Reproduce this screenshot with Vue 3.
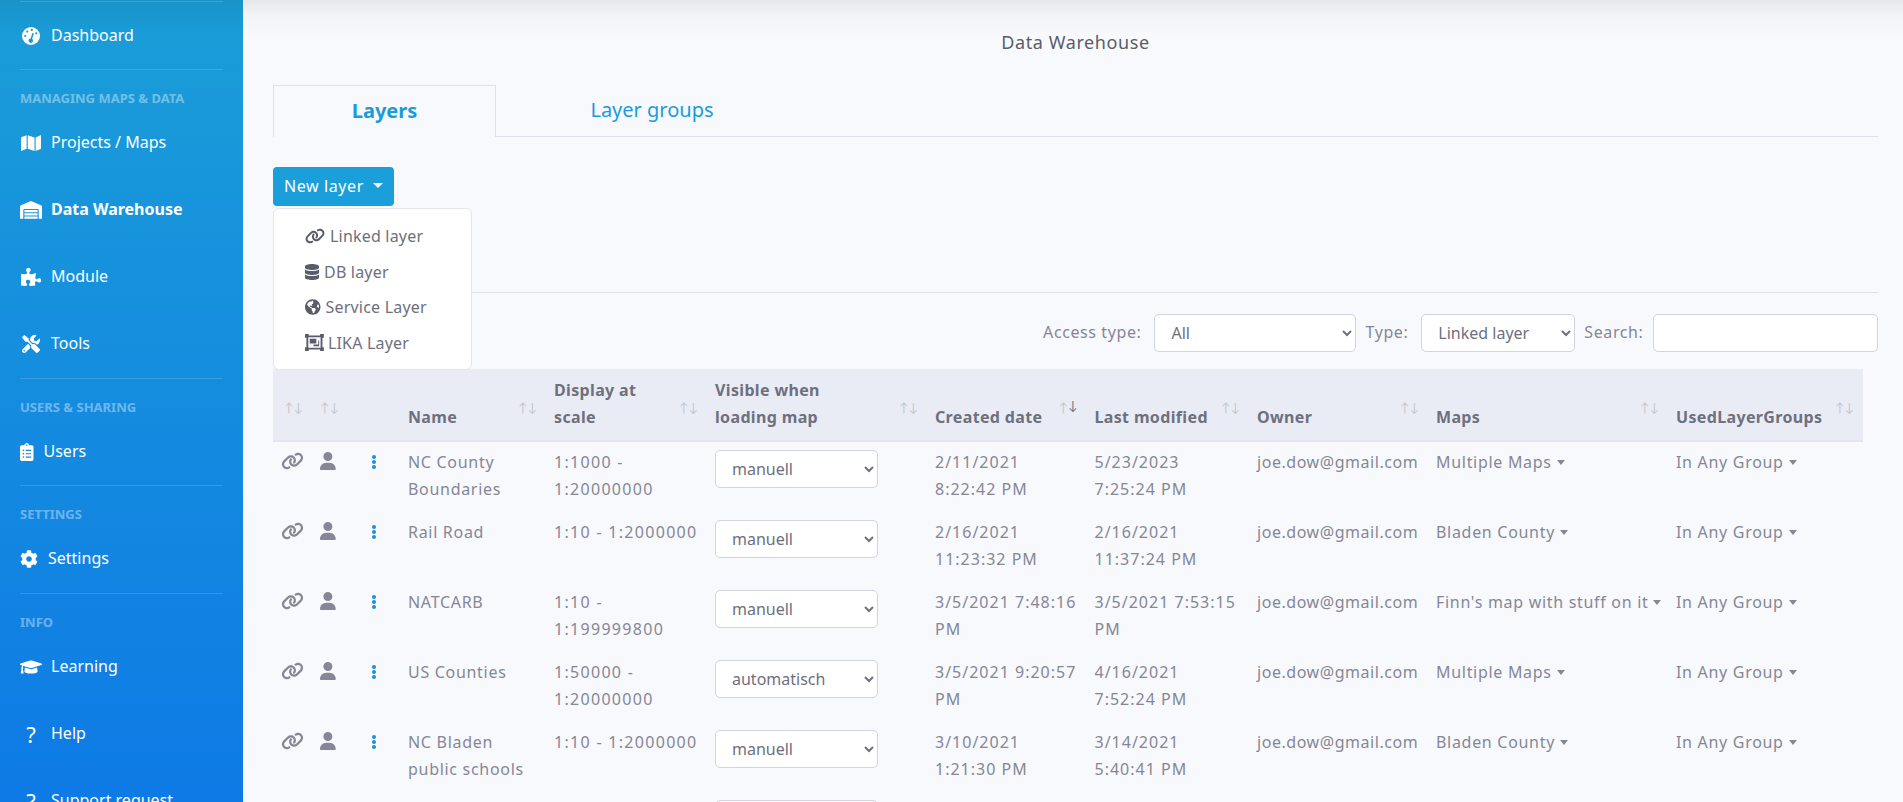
<script setup>
import { ref } from 'vue'

const icons = {
  map: ['0 0 576 512', 'M0 117.66v346.32c0 11.32 11.43 19.06 21.94 14.86L160 416V32L20.12 87.95A32.006 32.006 0 0 0 0 117.66zM192 416l192 64V96L192 32v384zM554.06 33.16L416 96v384l139.88-55.95A31.996 31.996 0 0 0 576 394.34V48.02c0-11.32-11.43-19.06-21.94-14.86z'],
  warehouse: ['0 0 640 512', 'M504 352H136.4c-4.4 0-8 3.6-8 8l-.1 48c0 4.4 3.6 8 8 8H504c4.4 0 8-3.6 8-8v-48c0-4.4-3.6-8-8-8zm0 96H136.1c-4.4 0-8 3.6-8 8l-.1 48c0 4.4 3.6 8 8 8h368c4.4 0 8-3.6 8-8v-48c0-4.4-3.6-8-8-8zm0-192H136.6c-4.4 0-8 3.6-8 8l-.1 48c0 4.4 3.6 8 8 8H504c4.4 0 8-3.6 8-8v-48c0-4.4-3.6-8-8-8zm106.5-139L338.4 3.7a48.15 48.15 0 0 0-36.9 0L29.5 117C11.7 124.5 0 141.9 0 161.3V504c0 4.4 3.6 8 8 8h80c4.4 0 8-3.6 8-8V256c0-17.6 14.6-32 32.6-32h382.8c18 0 32.6 14.4 32.6 32v248c0 4.4 3.6 8 8 8h80c4.4 0 8-3.6 8-8V161.3c0-19.4-11.7-36.8-29.5-44.3z'],
  puzzle: ['0 0 576 512', 'M519.442 288.651c-41.519 0-59.5 31.593-82.058 31.593C377.409 320.244 432 144 432 144s-196.288 80-196.288-3.297c0-35.827 36.288-46.25 36.288-85.985C272 19.216 243.885 0 210.539 0c-34.654 0-66.366 18.891-66.366 56.346 0 41.364 31.711 59.277 31.711 81.75C175.885 207.719 0 166.758 0 166.758v333.237s178.635 41.047 178.635-28.662c0-22.473-40-40.107-40-81.471 0-37.456 29.25-56.346 63.577-56.346 33.673 0 61.788 19.216 61.788 54.717 0 39.735-36.288 50.158-36.288 85.985 0 60.803 129.675 25.73 181.23 25.73 0 0-34.725-120.101 25.827-120.101 35.962 0 46.423 36.152 86.308 36.152C556.712 416 576 387.99 576 354.443c0-34.199-18.962-65.792-56.558-65.792z'],
  tools: ['0 0 512 512', 'M501.1 395.7L384 278.6c-23.1-23.1-57.6-27.6-85.4-13.9L192 158.1V96L64 0 0 64l96 128h62.1l106.6 106.6c-13.6 27.8-9.2 62.3 13.9 85.4l117.1 117.1c14.6 14.6 38.2 14.6 52.7 0l52.7-52.7c14.5-14.6 14.5-38.2 0-52.7zM331.7 225c28.3 0 54.9 11 74.9 31l19.4 19.4c15.8-6.9 30.8-16.5 43.8-29.5 37.1-37.1 49.7-89.3 37.9-136.7-2.2-9-13.5-12.1-20.1-5.5l-74.4 74.4-67.9-11.3L334 98.9l74.4-74.4c6.6-6.6 3.4-17.9-5.7-20.2-47.4-11.7-99.6.9-136.6 37.9-28.5 28.5-41.9 66.1-41.2 103.6l82.1 82.1c8.1-1.9 16.5-2.9 24.7-2.9zm-103.9 82l-56.7-56.7L18.7 402.8c-25 25-25 65.5 0 90.5s65.5 25 90.5 0l123.6-123.6c-7.6-19.9-9.9-41.6-5-62.7zM64 472c-13.2 0-24-10.8-24-24 0-13.3 10.7-24 24-24s24 10.7 24 24c0 13.2-10.7 24-24 24z'],
  clipboard: ['0 0 384 512', 'M336 64h-80c0-35.3-28.7-64-64-64s-64 28.7-64 64H48C21.5 64 0 85.5 0 112v352c0 26.5 21.5 48 48 48h288c26.5 0 48-21.5 48-48V112c0-26.5-21.5-48-48-48zM96 424c-13.3 0-24-10.7-24-24s10.7-24 24-24 24 10.7 24 24-10.7 24-24 24zm0-96c-13.3 0-24-10.7-24-24s10.7-24 24-24 24 10.7 24 24-10.7 24-24 24zm0-96c-13.3 0-24-10.7-24-24s10.7-24 24-24 24 10.7 24 24-10.7 24-24 24zm96-192c13.3 0 24 10.7 24 24s-10.7 24-24 24-24-10.7-24-24 10.7-24 24-24zm128 368c0 4.4-3.6 8-8 8H168c-4.4 0-8-3.6-8-8v-16c0-4.4 3.6-8 8-8h144c4.4 0 8 3.6 8 8v16zm0-96c0 4.4-3.6 8-8 8H168c-4.4 0-8-3.6-8-8v-16c0-4.4 3.6-8 8-8h144c4.4 0 8 3.6 8 8v16zm0-96c0 4.4-3.6 8-8 8H168c-4.4 0-8-3.6-8-8v-16c0-4.4 3.6-8 8-8h144c4.4 0 8 3.6 8 8v16z'],
  cog: ['0 0 512 512', 'M487.4 315.7l-42.6-24.6c4.3-23.2 4.3-47 0-70.2l42.6-24.6c4.9-2.8 7.1-8.6 5.5-14-11.1-35.6-30-67.8-54.7-94.6-3.8-4.1-10-5.1-14.8-2.3L380.8 110c-17.9-15.4-38.5-27.3-60.8-35.1V25.8c0-5.6-3.9-10.5-9.4-11.7-36.7-8.2-74.3-7.8-109.2 0-5.5 1.2-9.4 6.1-9.4 11.7V75c-22.2 7.9-42.8 19.8-60.8 35.1L88.7 85.5c-4.9-2.8-11-1.9-14.8 2.3-24.7 26.7-43.6 58.9-54.7 94.6-1.7 5.4.6 11.2 5.5 14L67.3 221c-4.3 23.2-4.3 47 0 70.2l-42.6 24.6c-4.9 2.8-7.1 8.6-5.5 14 11.1 35.6 30 67.8 54.7 94.6 3.8 4.1 10 5.1 14.8 2.3l42.6-24.6c17.9 15.4 38.5 27.3 60.8 35.1v49.2c0 5.6 3.9 10.5 9.4 11.7 36.7 8.2 74.3 7.8 109.2 0 5.5-1.2 9.4-6.1 9.4-11.7v-49.2c22.2-7.9 42.8-19.8 60.8-35.1l42.6 24.6c4.9 2.8 11 1.9 14.8-2.3 24.7-26.7 43.6-58.9 54.7-94.6 1.5-5.5-.7-11.3-5.6-14.1zM256 336c-44.1 0-80-35.9-80-80s35.9-80 80-80 80 35.9 80 80-35.9 80-80 80z'],
  cap: ['0 0 640 512', 'M622.34 153.2L343.4 67.5c-15.2-4.67-31.6-4.67-46.79 0L17.66 153.2c-23.54 7.23-23.54 38.36 0 45.59l48.63 14.94c-10.67 13.19-17.23 29.28-17.88 46.9C38.78 266.15 32 276.11 32 288c0 10.78 5.68 19.85 13.86 25.65L20.33 428.53C18.11 438.52 25.71 448 35.94 448h56.11c10.24 0 17.84-9.48 15.62-19.47L82.14 313.65C90.32 307.85 96 298.78 96 288c0-11.57-6.47-21.25-15.66-26.87.76-15.02 8.44-28.3 20.69-36.72L296.6 284.5c9.06 2.78 26.44 6.25 46.79 0l278.95-85.7c23.55-7.24 23.55-38.36 0-45.6zM352.79 315.09c-28.53 8.76-52.84 3.92-65.59 0l-145.02-44.55L128 384c0 35.35 85.96 64 192 64s192-28.65 192-64l-14.18-113.47-145.03 44.56z'],
  link: ['0 0 640 512', 'M579.8 267.7c56.5-56.5 56.5-148 0-204.5c-50-50-128.8-56.5-186.3-15.4l-1.6 1.1c-14.4 10.3-17.7 30.3-7.4 44.6s30.3 17.7 44.6 7.4l1.6-1.1c32.1-22.9 76-19.3 103.8 8.6c31.5 31.5 31.5 82.5 0 114L422.3 334.8c-31.5 31.5-82.5 31.5-114 0c-27.9-27.9-31.5-71.8-8.6-103.8l1.1-1.6c10.3-14.4 6.9-34.4-7.4-44.6s-34.4-6.9-44.6 7.4l-1.1 1.6C206.5 251.2 213 330 263 380c56.5 56.5 148 56.5 204.5 0L579.8 267.7zM60.2 244.3c-56.5 56.5-56.5 148 0 204.5c50 50 128.8 56.5 186.3 15.4l1.6-1.1c14.4-10.3 17.7-30.3 7.4-44.6s-30.3-17.7-44.6-7.4l-1.6 1.1c-32.1 22.9-76 19.3-103.8-8.6C74 372 74 321 105.5 289.5L217.7 177.2c31.5-31.5 82.5-31.5 114 0c27.9 27.9 31.5 71.8 8.6 103.9l-1.1 1.6c-10.3 14.4-6.9 34.4 7.4 44.6s34.4 6.9 44.6-7.4l1.1-1.6C433.5 260.8 427 182 377 132c-56.5-56.5-148-56.5-204.5 0L60.2 244.3z'],
  database: ['0 0 448 512', 'M448 73.143v45.714C448 159.143 347.667 192 224 192S0 159.143 0 118.857V73.143C0 32.857 100.333 0 224 0s224 32.857 224 73.143zM448 176v102.857C448 319.143 347.667 352 224 352S0 319.143 0 278.857V176c48.125 33.143 136.208 48.572 224 48.572S399.874 209.143 448 176zm0 160v102.857C448 479.143 347.667 512 224 512S0 479.143 0 438.857V336c48.125 33.143 136.208 48.572 224 48.572S399.874 369.143 448 336z'],
  globe: ['0 0 496 512', 'M248 8C111.03 8 0 119.03 0 256s111.03 248 248 248 248-111.03 248-248S384.97 8 248 8zm82.29 357.6c-3.9 3.88-7.99 7.95-11.31 11.28-2.99 3-5.1 6.7-6.17 10.71-1.51 5.66-2.73 11.38-4.77 16.87l-17.39 46.85c-13.76 3-28 4.69-42.65 4.69v-27.38c1.69-12.62-7.64-36.26-22.63-51.25-6-6-9.37-14.14-9.37-22.63v-32.01c0-11.64-6.27-22.34-16.46-27.97-14.37-7.95-34.81-19.06-48.81-26.11-11.48-5.78-22.1-13.14-31.65-21.75l-.8-.72a114.792 114.792 0 0 1-18.06-20.74c-9.38-13.77-24.66-36.42-34.59-51.14 20.47-45.5 57.36-82.04 103.2-101.89l24.01 12.01C203.48 89.74 216 82.01 216 70.11v-11.3c7.99-1.29 16.12-2.11 24.39-2.42l28.3 28.3c6.25 6.25 6.25 16.38 0 22.63L264 112l-10.34 10.34c-3.12 3.12-3.12 8.19 0 11.31l4.69 4.69c3.12 3.12 3.12 8.19 0 11.31l-8 8a8.008 8.008 0 0 1-5.66 2.34h-8.99c-2.08 0-4.08.81-5.58 2.27l-9.92 9.65a8.008 8.008 0 0 0-1.58 9.31l15.59 31.19c2.66 5.32-1.21 11.58-7.15 11.58h-5.64c-1.93 0-3.79-.7-5.24-1.96l-9.28-8.06a16.017 16.017 0 0 0-15.55-3.1l-31.17 10.39a11.95 11.95 0 0 0-8.17 11.34c0 4.53 2.56 8.66 6.61 10.69l11.08 5.54c9.41 4.71 19.79 7.16 30.31 7.16s22.59 27.29 32 32h66.75c8.49 0 16.62 3.37 22.63 9.37l13.69 13.69a30.503 30.503 0 0 1 8.93 21.57 46.536 46.536 0 0 1-13.72 32.98zM417 274.25c-5.79-1.45-10.84-5-14.15-9.97l-17.98-26.97a23.97 23.97 0 0 1 0-26.62l19.59-29.38c2.32-3.47 5.5-6.29 9.24-8.15l12.98-6.49C440.2 193.59 448 223.87 448 256c0 8.67-.74 17.16-1.82 25.54L417 274.25z'],
  user: ['0 0 448 512', 'M224 256A128 128 0 1 0 224 0a128 128 0 1 0 0 256zm-45.7 48C79.8 304 0 383.8 0 482.3C0 498.7 13.3 512 29.7 512H418.3c16.4 0 29.7-13.3 29.7-29.7C448 383.8 368.2 304 269.7 304H178.3z']
}

const navGroups = [
  { items: [{ label: 'Dashboard', gauge: true }] },
  {
    heading: 'MANAGING MAPS & DATA',
    items: [
      { label: 'Projects / Maps', icon: 'map' },
      { label: 'Data Warehouse', icon: 'warehouse', active: true },
      { label: 'Module', icon: 'puzzle' },
      { label: 'Tools', icon: 'tools' }
    ]
  },
  { heading: 'USERS & SHARING', items: [{ label: 'Users', icon: 'clipboard', narrow: true }] },
  { heading: 'SETTINGS', items: [{ label: 'Settings', icon: 'cog', narrow: true }] },
  {
    heading: 'INFO',
    items: [
      { label: 'Learning', icon: 'cap' },
      { label: 'Help', glyph: '?' },
      { label: 'Support request', glyph: '?' }
    ]
  }
]

const newLayerItems = [
  { label: 'Linked layer', icon: 'link', cls: 'm-link' },
  { label: 'DB layer', icon: 'database', cls: 'm-db' },
  { label: 'Service Layer', icon: 'globe', cls: 'm-globe' },
  { label: 'LIKA Layer', square: true, cls: 'm-lika' }
]

const headers = [
  { text: '' },
  { text: '' },
  { text: '', noSort: true },
  { text: 'Name' },
  { text: 'Display at\nscale' },
  { text: 'Visible when\nloading map' },
  { text: 'Created date', sorted: true },
  { text: 'Last modified' },
  { text: 'Owner' },
  { text: 'Maps' },
  { text: 'UsedLayerGroups' }
]

const colWidths = [39, 36, 52, 146, 161, 220, 159.5, 162.5, 179, 240, 195]

const layers = ref([
  { name: 'NC County\nBoundaries', scale: '1:1000 -\n1:20000000', visible: 'manuell', created: '2/11/2021\n8:22:42 PM', modified: '5/23/2023\n7:25:24 PM', maps: 'Multiple Maps' },
  { name: 'Rail Road', scale: '1:10 - 1:2000000', visible: 'manuell', created: '2/16/2021\n11:23:32 PM', modified: '2/16/2021\n11:37:24 PM', maps: 'Bladen County' },
  { name: 'NATCARB', scale: '1:10 -\n1:199999800', visible: 'manuell', created: '3/5/2021 7:48:16\nPM', modified: '3/5/2021 7:53:15\nPM', maps: "Finn's map with stuff on it" },
  { name: 'US Counties', scale: '1:50000 -\n1:20000000', visible: 'automatisch', created: '3/5/2021 9:20:57\nPM', modified: '4/16/2021\n7:52:24 PM', maps: 'Multiple Maps' },
  { name: 'NC Bladen\npublic schools', scale: '1:10 - 1:2000000', visible: 'manuell', created: '3/10/2021\n1:21:30 PM', modified: '3/14/2021\n5:40:41 PM', maps: 'Bladen County' }
])
</script>

<template>
  <div class="layout">
    <aside class="sidebar">
      <template v-for="(group, g) in navGroups" :key="g">
        <hr class="side-line" />
        <div v-if="group.heading" class="side-heading">{{ group.heading }}</div>
        <a v-for="item in group.items" :key="item.label" class="nav-item" :class="{ active: item.active }">
          <span class="nav-icon" :class="{ narrow: item.narrow }">
            <svg v-if="item.gauge" viewBox="0 0 512 512" class="icon">
              <circle cx="256" cy="256" r="256" fill="#fff" />
              <g fill="#199ad6">
                <circle cx="92" cy="258" r="31" />
                <circle cx="150" cy="130" r="31" />
                <circle cx="278" cy="84" r="31" />
                <circle cx="408" cy="180" r="31" />
                <path d="M296 170l44 14-52 152a64 64 0 1 1-44-12z" />
              </g>
            </svg>
            <span v-else-if="item.glyph" class="nav-glyph">{{ item.glyph }}</span>
            <svg v-else :viewBox="icons[item.icon][0]" class="icon"><path :d="icons[item.icon][1]" fill="#fff" /></svg>
          </span>
          <span class="nav-label">{{ item.label }}</span>
        </a>
      </template>
    </aside>

    <main class="content">
      <h1 class="page-title">Data Warehouse</h1>

      <nav class="tabs">
        <a class="tab active">Layers</a>
        <a class="tab">Layer groups</a>
      </nav>

      <div class="new-layer">
        <button class="btn-new">New layer<span class="caret"></span></button>
        <ul class="menu">
          <li v-for="m in newLayerItems" :key="m.label" :class="m.cls">
            <svg v-if="m.square" viewBox="0 0 20 18" class="menu-icon">
              <path fill="#5a5c69" fill-rule="evenodd" d="M0 0h4v1.5h12V0h4v4h-1.5v10H20v4h-4v-1.5H4V18H0v-4h1.5V4H0zM3.5 3.5v11h13v-11zM5 5h7v5H5zM9 11h5V7h1v6H9z" />
            </svg>
            <svg v-else :viewBox="icons[m.icon][0]" class="menu-icon"><path :d="icons[m.icon][1]" fill="#5a5c69" /></svg>
            <span>{{ m.label }}</span>
          </li>
        </ul>
      </div>

      <hr class="section-line" />

      <div class="filters">
        <label>Access type:</label>
        <select class="field f-access"><option>All</option></select>
        <label>Type:</label>
        <select class="field f-type"><option>Linked layer</option></select>
        <label class="search-label">Search:</label>
        <input class="field f-search" type="text" />
      </div>

      <table class="layers">
        <colgroup>
          <col v-for="(w, i) in colWidths" :key="i" :style="{ width: w + 'px' }" />
        </colgroup>
        <thead>
          <tr>
            <th v-for="(h, i) in headers" :key="i">
              {{ h.text }}
              <span v-if="!h.noSort" class="sort">
                <i>↑</i><i :class="{ on: h.sorted }">↓</i>
              </span>
            </th>
          </tr>
        </thead>
        <tbody>
          <tr v-for="layer in layers" :key="layer.name">
            <td><svg :viewBox="icons.link[0]" class="row-link"><path :d="icons.link[1]" fill="#858796" /></svg></td>
            <td><svg :viewBox="icons.user[0]" class="row-user"><path :d="icons.user[1]" fill="#858796" /></svg></td>
            <td class="dots-cell"><span class="dots"><b></b><b></b><b></b></span></td>
            <td class="wrap">{{ layer.name }}</td>
            <td class="wrap scale">{{ layer.scale }}</td>
            <td>
              <select class="field f-visible" :value="layer.visible">
                <option>manuell</option>
                <option>automatisch</option>
              </select>
            </td>
            <td class="wrap date">{{ layer.created }}</td>
            <td class="wrap date">{{ layer.modified }}</td>
            <td class="owner">joe.dow@gmail.com</td>
            <td class="drop-cell"><span class="drop">{{ layer.maps }}</span></td>
            <td class="drop-cell"><span class="drop">In Any Group</span></td>
          </tr>
          <tr>
            <td colspan="5"></td>
            <td><select class="field f-visible"><option>manuell</option></select></td>
            <td colspan="5"></td>
          </tr>
        </tbody>
      </table>
    </main>
  </div>
</template>

<style>
html, body {
  margin: 0;
  height: 100%;
  overflow: hidden;
}
</style>

<style scoped>
* {
  box-sizing: border-box;
}

.layout {
  display: flex;
  height: 100vh;
  overflow: hidden;
  font-family: "Noto Sans", Lato, sans-serif;
  font-size: 16px;
  color: #858796;
  background: linear-gradient(#e6e7ea, #f3f4f7 16px, #f8f9fd 36px);
}

.sidebar {
  width: 243px;
  flex-shrink: 0;
  padding: 1px 20px 0;
  color: #fff;
  background: linear-gradient(180deg, #1894c9 0, #1a9cd8 36px, #0e7ae6 100%);
}

.side-line {
  margin: 0;
  border: 0;
  border-top: 1px solid rgba(255, 255, 255, 0.15);
}

.side-heading {
  padding-top: 20px;
  height: 39.5px;
  line-height: 16px;
  font-size: 13px;
  font-weight: 700;
  color: rgba(255, 255, 255, 0.4);
}

.nav-item {
  display: flex;
  align-items: center;
  height: 67px;
}

.nav-item.active {
  font-weight: 700;
}

.nav-label {
  padding-bottom: 2px;
}

.nav-icon {
  display: flex;
  justify-content: center;
  width: 22px;
  margin-right: 9px;
}

.nav-icon.narrow {
  width: auto;
  margin-right: 10px;
}

.icon {
  display: block;
  height: 18px;
}

.nav-glyph {
  font-size: 22px;
  font-weight: 400;
  line-height: 18px;
}

.content {
  flex: 1;
  min-width: 0;
  padding: 0 25px 0 30px;
}

.page-title {
  margin: 0;
  padding: 29px 0 29px;
  font-size: 18px;
  font-weight: 400;
  letter-spacing: 0.6px;
  line-height: 27px;
  text-align: center;
  color: #5a5c69;
}

.tabs {
  display: flex;
  height: 52px;
  border-bottom: 1px solid #dfe2ec;
}

.tab {
  display: flex;
  align-items: center;
  justify-content: center;
  height: 52px;
  font-size: 20px;
  color: #1a9bdb;
}

.tab.active {
  width: 223px;
  padding-bottom: 2px;
  font-weight: 700;
  background: #f8f9fd;
  border: 1px solid #dfe2ec;
  border-bottom: 0;
}

.tab:not(.active) {
  width: 312px;
  padding-bottom: 4px;
}

.new-layer {
  position: relative;
  margin-top: 30px;
  height: 39px;
}

.btn-new {
  display: inline-flex;
  align-items: center;
  width: 121px;
  height: 39px;
  padding: 0 11px 2px;
  border: 0;
  border-radius: 4px;
  background: #1a9fdb;
  color: #fff;
  font: inherit;
  letter-spacing: 0.6px;
}

.caret {
  margin-left: 9px;
  border-top: 5px solid #fff;
  border-left: 5px solid transparent;
  border-right: 5px solid transparent;
}

.menu {
  position: absolute;
  top: 41px;
  left: 0;
  z-index: 5;
  width: 199px;
  height: 162px;
  margin: 0;
  padding: 9.5px 0 0 31px;
  list-style: none;
  background: #fff;
  border: 1px solid #e3e6f0;
  border-radius: 6px;
  color: #6e707e;
  letter-spacing: 0.2px;
}

.menu li {
  display: flex;
  align-items: center;
  height: 35.5px;
}

.menu-icon {
  display: block;
  height: 16px;
}

.m-link span { margin-left: 5px; }
.m-db span { margin-left: 5px; }
.m-globe span { margin-left: 5px; }
.m-lika span { margin-left: 4px; }
.m-lika .menu-icon { height: 17px; }

.section-line {
  margin: 86px 0 0;
  border: 0;
  border-top: 1px solid #dfe2ec;
}

.filters {
  display: flex;
  justify-content: flex-end;
  align-items: center;
  margin-top: 20px;
  height: 39px;
}

.filters label {
  margin-left: 9px;
  margin-right: 13px;
  padding-bottom: 2px;
  letter-spacing: 0.6px;
}

.filters .search-label {
  margin-right: 9.5px;
}

.field {
  height: 38px;
  padding: 0 12px;
  background-color: #fff;
  border: 1px solid #d1d3e2;
  border-radius: 5px;
  font: inherit;
  letter-spacing: 0;
  color: #6e707e;
}

.f-access { width: 202px; }
.f-type { width: 154px; }
.f-search { width: 225px; }
.f-visible { width: 163px; }

.layers {
  width: 1590px;
  margin-top: 17px;
  table-layout: fixed;
  border-collapse: collapse;
  line-height: 27px;
  letter-spacing: 0.7px;
}

.layers th {
  position: relative;
  padding: 7px 8px 9px;
  vertical-align: bottom;
  text-align: left;
  white-space: pre-line;
  font-weight: 700;
  letter-spacing: 0.35px;
  color: #6e707e;
  background: #e9ecf4;
  border-bottom: 2px solid #e3e6f0;
  height: 72px;
}

.layers td {
  padding: 7px 8px 9px;
  vertical-align: top;
  height: 70px;
}

.wrap {
  white-space: pre-line;
}

.scale {
  letter-spacing: 1.3px;
}

.date {
  letter-spacing: 1px;
}

.owner {
  letter-spacing: 0.55px;
}

.sort {
  position: absolute;
  right: 9px;
  bottom: 18px;
  display: flex;
  font-size: 12.5px;
  line-height: 28px;
  font-weight: 400;
  letter-spacing: 0;
  color: #6e707e;
}

.sort i {
  font-style: normal;
  opacity: 0.3;
}

.sort i.on {
  opacity: 1;
  position: relative;
  top: -2px;
}

.row-link {
  display: block;
  width: 23px;
  height: 18px;
  margin-top: 3px;
}

.row-user {
  display: block;
  height: 18px;
  margin-top: 3px;
}

.layers td.dots-cell {
  padding-left: 24px;
}

.dots {
  display: flex;
  flex-direction: column;
  gap: 1.2px;
  padding-top: 5.5px;
}

.dots b {
  width: 4px;
  height: 4px;
  border-radius: 50%;
  background: #1a8fdb;
}

.f-visible {
  display: block;
  margin-top: 1px;
}

.drop-cell {
  white-space: nowrap;
}

.drop::after {
  content: "";
  display: inline-block;
  margin-left: 5px;
  vertical-align: 3px;
  border-top: 5px solid #858796;
  border-left: 4.5px solid transparent;
  border-right: 4.5px solid transparent;
}
</style>
